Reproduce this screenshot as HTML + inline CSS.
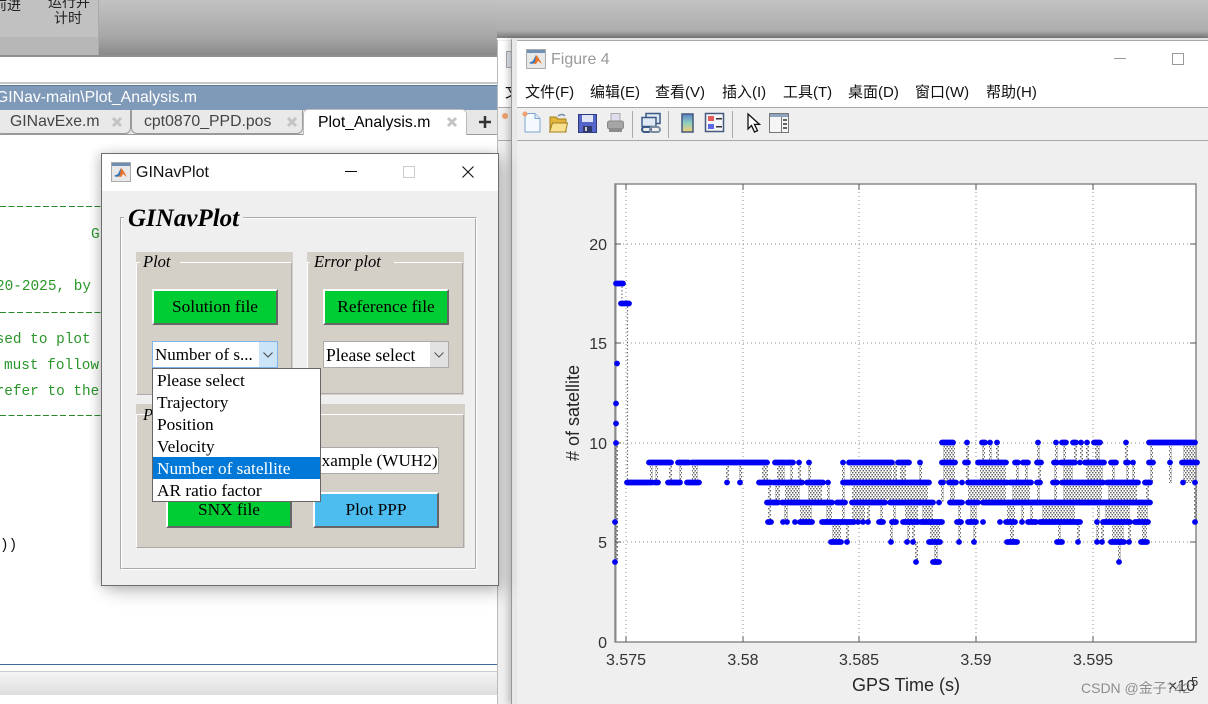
<!DOCTYPE html>
<html><head><meta charset="utf-8"><style>
html,body{margin:0;padding:0;background:#fff}
#p{position:relative;width:1208px;height:704px;overflow:hidden;background:#fff;font-family:"Liberation Sans","Noto Sans CJK SC",sans-serif}
#p div,#p span.a{position:absolute;box-sizing:border-box}
.t{white-space:nowrap;line-height:1}
.m{font-family:"Liberation Mono",monospace;font-size:14.4px;color:#2a962a;white-space:pre;line-height:16px}
.ds{height:1px;left:0;width:101px;background:repeating-linear-gradient(90deg,#2a8a2a 0,#2a8a2a 6px,transparent 6px,transparent 8.6px)}
.s{font-family:"Liberation Serif","Noto Serif CJK SC",serif;color:#000;white-space:nowrap;font-size:17.3px;line-height:20px}
.tab{background:#e9e9e9;border:1px solid #9a9a9a;border-top:0;border-radius:0 0 6px 6px;color:#444;font-size:15.8px;line-height:23px;padding-left:0;white-space:nowrap}
.btn{border:2px solid;border-color:#fff #666 #666 #fff;text-align:center;font-family:"Liberation Serif",serif;font-size:17.3px;color:#000;line-height:32px}
.pan{background:#d4d0c8}
.inner{border:2px solid;border-color:#fff #aaa #aaa #fff;}
.menu{font-size:15px;color:#111;white-space:nowrap;line-height:18px;font-family:"Liberation Sans","Noto Sans CJK SC",sans-serif}
.li{left:1px;width:167px;height:22px;font-family:"Liberation Serif",serif;font-size:17.3px;line-height:22px;padding-left:4px;color:#000;white-space:nowrap}
.tk{font-size:16px;color:#333;line-height:18px;white-space:nowrap}
</style></head><body><div id="p">

<!-- top ribbon -->
<div style="left:0;top:0;width:497px;height:55px;background:linear-gradient(#c2c2c2,#a8a8a8 65%,#8a8a8a)"></div>
<div style="left:497px;top:0;width:711px;height:38px;background:linear-gradient(#c2c2c2,#aeaeae 80%,#7c7c7c)"></div>
<div style="left:0;top:0;width:98px;height:37px;background:#c1c1c1"></div>
<div style="left:0;top:37px;width:98px;height:18px;background:#b7b7b7"></div>
<div style="left:98px;top:0;width:1px;height:55px;background:#aaa"></div>
<div class="t" style="left:-7px;top:-2px;font-size:14px;color:#222">前进</div>
<div class="t" style="left:48px;top:-5px;font-size:14px;color:#222">运行并</div>
<div class="t" style="left:54px;top:11px;font-size:14px;color:#222">计时</div>
<div style="left:0;top:55px;width:497px;height:2px;background:#8f8f8f"></div>

<!-- editor -->
<div style="left:0;top:57px;width:497px;height:26px;background:#fff"></div>
<div style="left:0;top:82px;width:497px;height:2px;background:#c8c8c8"></div>
<div style="left:0;top:85px;width:497px;height:25px;background:#7f9ab8;border-top:1px solid #5c7a9b"></div>
<div class="t" style="left:-4px;top:88px;font-size:15.8px;color:#fff;line-height:20px">GINav-main\Plot_Analysis.m</div>
<div style="left:0;top:110px;width:497px;height:25px;background:#e6e6e6"></div>
<div class="tab" style="left:-4px;top:110px;width:135px;height:24px;padding-left:13px">GINavExe.m</div>
<div class="tab" style="left:131px;top:110px;width:172px;height:24px;padding-left:12px">cpt0870_PPD.pos</div>
<div class="tab" style="left:303px;top:109px;width:164px;height:26px;background:#fff;color:#000;border:1px solid #bbb;border-bottom:0;border-radius:5px 5px 0 0;padding-left:14px;line-height:25px">Plot_Analysis.m</div>
<svg style="position:absolute;left:0;top:110px" width="497" height="25"><path d="M113 8l8 8M121 8l-8 8M288 8l8 8M296 8l-8 8M448 8l8 8M456 8l-8 8" stroke="#c4c4c4" stroke-width="3" fill="none"/><path d="M485 6v12M479 12h12" stroke="#333" stroke-width="2.500"/></svg>
<div style="left:0;top:134px;width:303px;height:1px;background:#9a9a9a"></div>
<div style="left:467px;top:134px;width:30px;height:1px;background:#9a9a9a"></div>

<div class="ds" style="top:206px"></div>
<div class="m" style="left:91px;top:227px">G</div>
<div class="m" style="left:-4px;top:279px">20-2025, by</div>
<div class="ds" style="top:312px"></div>
<div class="m" style="left:-13px;top:332px"> sed to plot</div>
<div class="m" style="left:4px;top:358px">must follow</div>
<div class="m" style="left:-13px;top:384px"> refer to the</div>
<div class="ds" style="top:415px"></div>
<div class="m" style="left:0;top:538px;color:#111">))</div>
<div style="left:0;top:664px;width:497px;height:1px;background:#3f6d9b"></div>
<div style="left:0;top:671px;width:497px;height:1px;background:#ccc"></div>
<div style="left:0;top:672px;width:497px;height:23px;background:linear-gradient(#f5f5f5,#dedede)"></div>

<!-- back window -->
<div style="left:497px;top:40px;width:16px;height:664px;background:#efefef;border-left:1px solid #bbb"></div>
<div style="left:498px;top:41px;width:14px;height:66px;background:#fff"></div>
<div style="left:506px;top:51px;width:6px;height:17px;background:#dfe5ec;border:1px solid #aaa"></div>
<div class="menu" style="left:505px;top:84px">文</div>
<div style="left:498px;top:107px;width:14px;height:1px;background:#aaa"></div>
<div style="left:498px;top:140px;width:14px;height:1px;background:#aaa"></div>
<div style="left:502px;top:113px;width:6px;height:6px;background:#f0a070;border-radius:3px"></div>

<!-- figure window -->
<div style="left:511px;top:38px;width:697px;height:666px;background:#e8e8e8;border-left:1px solid #999;border-top:2px solid #e4e4e4;box-shadow:-3px 0 6px rgba(0,0,0,.2)"></div>
<div style="left:517px;top:41px;width:691px;height:66px;background:#fff"></div>
<div style="left:517px;top:40px;width:691px;height:1px;background:#aaa"></div>
<svg style="position:absolute;left:526px;top:49px" width="20" height="20" viewBox="0 0 20 20"><rect x=".5" y=".5" width="19" height="19" fill="#e8e8e8" stroke="#aaa"/><rect x="1" y="1" width="18" height="3" fill="#6f8fb5"/><path d="M3 14l4-2 3-6 2 2 4 7-4-3-2 3z" fill="#e8742a"/><path d="M3 14l4-2 3-6-1 7-3 2z" fill="#2d78c4"/></svg>
<div class="t" style="left:551px;top:51px;font-size:16px;color:#9a9a9a;line-height:18px">Figure 4</div>
<div style="left:1114px;top:58px;width:12px;height:1px;background:#999"></div>
<div style="left:1172px;top:53px;width:12px;height:12px;border:1px solid #999"></div>
<div class="menu" style="left:525px;top:84px">文件(F)</div>
<div class="menu" style="left:590px;top:84px">编辑(E)</div>
<div class="menu" style="left:655px;top:84px">查看(V)</div>
<div class="menu" style="left:722px;top:84px">插入(I)</div>
<div class="menu" style="left:783px;top:84px">工具(T)</div>
<div class="menu" style="left:848px;top:84px">桌面(D)</div>
<div class="menu" style="left:915px;top:84px">窗口(W)</div>
<div class="menu" style="left:986px;top:84px">帮助(H)</div>
<div style="left:517px;top:107px;width:691px;height:1px;background:#a8a8a8"></div>
<div style="left:517px;top:108px;width:691px;height:596px;background:#efefef"></div>
<div style="left:517px;top:140px;width:691px;height:1px;background:#a8a8a8"></div>

<!-- toolbar icons -->
<svg style="position:absolute;left:515px;top:105px" width="285" height="36" viewBox="0 0 285 36">
<path d="M10 8.500h10l5 5v13.500H10z" fill="#f4f9ff" stroke="#7ea6d0"/><path d="M20 8.500v5h5" fill="#dce9f7" stroke="#7ea6d0"/><circle cx="10" cy="9" r="2.500" fill="#f0a070"/>
<path d="M35 12h6l2 2h8v13H35z" fill="#e3b53f" stroke="#a07f1a"/><path d="M34.500 27l3-9h15l-2 9z" fill="#f9e08f" stroke="#a07f1a"/><path d="M43 11q4-3 7 0" fill="none" stroke="#7b8ea8" stroke-width="1.500"/>
<rect x="63.500" y="9.500" width="18" height="18" fill="#5566c8" stroke="#2d3a80"/><rect x="67" y="10" width="11" height="7" fill="#dfe5f5"/><rect x="68" y="21" width="9" height="6" fill="#30386a"/><rect x="70" y="22" width="2" height="4" fill="#ccc"/>
<rect x="96" y="8.500" width="9" height="8" fill="#dde" stroke="#aaa"/><rect x="92.500" y="16" width="16" height="8" rx="2" fill="#a5a5a5" stroke="#888"/><rect x="94" y="23" width="13" height="4" fill="#8c8c8c"/>
<rect x="117" y="6" width="1" height="27" fill="#aaa"/>
<rect x="131" y="8.500" width="14" height="10" fill="#dfe8f3" stroke="#3a5a85" stroke-width="1.500"/><rect x="127" y="12.500" width="14" height="9" fill="#dfe8f3" stroke="#3a5a85" stroke-width="1.500"/><rect x="127" y="22" width="9" height="5" rx="2.500" fill="none" stroke="#3a5a85" stroke-width="2"/><rect x="135" y="22" width="10" height="5" rx="2.500" fill="none" stroke="#7c8ba0" stroke-width="2"/>
<rect x="153" y="6" width="1" height="27" fill="#aaa"/>
<defs><linearGradient id="cb" x1="0" y1="0" x2="0" y2="1"><stop offset="0" stop-color="#5b7fc8"/><stop offset=".5" stop-color="#8fd0c0"/><stop offset="1" stop-color="#f5cc70"/></linearGradient></defs>
<rect x="167" y="9" width="11" height="18" fill="url(#cb)" stroke="#44597c" stroke-width="1.500"/>
<rect x="190.500" y="8.500" width="18" height="18" fill="#f4f6fa" stroke="#44597c" stroke-width="1.500"/><rect x="193" y="11" width="6" height="5" fill="#e25a5a"/><rect x="193" y="19" width="6" height="5" fill="#5a6ae2"/><rect x="201" y="13" width="6" height="1.500" fill="#333"/><rect x="201" y="21" width="6" height="1.500" fill="#333"/>
<rect x="217" y="6" width="1" height="27" fill="#aaa"/>
<path d="M233 9v15l3.500-3.500 3 6.500 3-1.300-3-6.300h5z" fill="#fff" stroke="#111" stroke-width="1.300"/>
<rect x="254.500" y="8.500" width="19" height="19" fill="#f5f5f5" stroke="#777"/><rect x="255" y="9" width="18" height="3" fill="#8da3c0"/><rect x="266" y="12" width="1" height="15" fill="#777"/><path d="M268 15h4M268 19h4M268 23h4" stroke="#333" stroke-width="1.500"/>
</svg>

<!-- plot -->
<svg style="position:absolute;left:0;top:0" width="1208" height="704" viewBox="0 0 1208 704">
<defs><pattern id="d" width="3" height="4" patternUnits="userSpaceOnUse"><rect width="1.500" height="1.500" fill="#666"/><rect x="1.500" y="2" width="1.500" height="1.500" fill="#666"/></pattern></defs>
<rect x="615" y="184" width="581" height="458" fill="#fff"/>
<path d="M626 184V642M743 184V642M859 184V642M976 184V642M1093 184V642M615 244H1196M615 343H1196M615 443H1196M615 542H1196" fill="none" stroke="#8c8c8c" stroke-width="1" stroke-dasharray="1 3"/>
<path d="M615 184H1196V642H615Z" fill="none" stroke="#8a8a8a" stroke-width="1.500"/>
<path d="M615.500 184V642" stroke="#8a8a8a" stroke-width="2"/>
<path d="M626 642v-6M743 642v-6M859 642v-6M976 642v-6M1093 642v-6M626 184v6M743 184v6M859 184v6M976 184v6M1093 184v6M615 542h6M615 443h6M615 343h6M615 244h6M1196 542h-6M1196 443h-6M1196 343h-6M1196 244h-6" stroke="#555" stroke-width="1"/>
<path d="M622 283V303M627.500 303V483" fill="none" stroke="#777" stroke-width="1.200" stroke-dasharray="1.500 2"/>
<path fill="url(#d)" d="M615 443h3v119h-3z
M650 463h3v20h-3zM655 463h3v20h-3zM669 463h3v20h-3zM679 463h3v20h-3zM692 463h6v20h-6zM726 463h3v20h-3zM739 463h3v20h-3zM762 463h6v20h-6zM777 463h8v20h-8zM790 463h3v20h-3zM798 463h3v20h-3zM808 463h3v20h-3zM842 463h3v20h-3zM850 463h42v20h-42zM893 463h4v20h-4zM900 463h6v20h-6zM919 463h3v20h-3zM943 463h12v20h-12zM966 463h3v20h-3zM980 463h26v20h-26zM1016 463h3v20h-3zM1025 463h3v20h-3zM1038 463h3v20h-3zM1054 463h3v20h-3zM1063 463h10v20h-10zM1086 463h17v20h-17zM1112 463h3v20h-3zM1126 463h3v20h-3zM1132 463h3v20h-3zM1150 463h3v20h-3zM1169 463h3v20h-3zM1183 463h13v20h-13z
M768 483h3v19h-3zM775 483h5v19h-5zM785 483h15v19h-15zM808 483h14v19h-14zM827 483h3v19h-3zM842 483h3v19h-3zM852 483h76v19h-76zM941 483h3v19h-3zM950 483h5v19h-5zM968 483h38v19h-38zM1012 483h18v19h-18zM1037 483h3v19h-3zM1054 483h3v19h-3zM1063 483h39v19h-39zM1108 483h29v19h-29zM1146 483h3v19h-3zM1194 483h3v39h-3z
M768 502h3v20h-3zM784 502h4v20h-4zM800 502h12v20h-12zM826 502h6v20h-6zM842 502h3v20h-3zM852 502h13v20h-13zM867 502h3v20h-3zM880 502h3v20h-3zM893 502h3v20h-3zM905 502h13v20h-13zM922 502h11v20h-11zM958 502h3v20h-3zM970 502h7v20h-7zM1007 502h8v20h-8zM1021 502h3v20h-3zM1030 502h3v20h-3zM1042 502h33v20h-33zM1097 502h3v20h-3zM1105 502h25v20h-25zM1137 502h11v20h-11z
M832 522h9v20h-9zM846 522h3v20h-3zM890 522h3v20h-3zM907 522h3v20h-3zM912 522h3v20h-3zM930 522h10v20h-10zM958 522h3v20h-3zM973 522h3v20h-3zM1010 522h4v20h-4zM1058 522h3v20h-3zM1077 522h3v20h-3zM1096 522h3v20h-3zM1101 522h3v20h-3zM1112 522h12v20h-12zM1128 522h3v20h-3zM1142 522h5v20h-5z
M915 542h3v20h-3zM934 542h4v20h-4zM1118 542h3v20h-3z
M943 443h12v20h-12zM966 443h3v20h-3zM982 443h3v20h-3zM989 443h3v20h-3zM996 443h3v20h-3zM1037 443h3v20h-3zM1055 443h3v20h-3zM1063 443h3v20h-3zM1074 443h3v20h-3zM1080 443h3v20h-3zM1086 443h3v20h-3zM1095 443h5v20h-5zM1125 443h3v20h-3zM1150 443h3v20h-3zM1169 443h3v20h-3zM1183 443h12v20h-12z"/>
<g fill="none" stroke="#0000f5" stroke-width="5.800" stroke-linecap="round">
<path d="M616 283.500H623M621 303.500H629M617 363.500h.01M616 403.500h.01M616 423.500h.01M616 443h.01M615 522h.01M615 562h.01"/>
<path d="M942 442.500H953M967 442.500h.01M982 442.500H985M990 442.500h.01M997 442.500h.01M1038 442.500h.01M1056 442.500h.01M1062 442.500H1066M1073 442.500H1076M1081 442.500h.01M1087 442.500h.01M1094 442.500H1100M1126 442.500h.01M1149 442.500H1195"/>
<path d="M649 462.500H671M678 462.500H689M692 462.500H767M775 462.500H785M787 462.500H793M799 462.500h.01M809 462.500h.01M843 462.500h.01M849 462.500H892M898 462.500H909M920 462.500h.01M942 462.500H955M965 462.500H968M978 462.500H1006M1015 462.500H1018M1023 462.500H1028M1037 462.500H1041M1054 462.500H1057M1061 462.500H1075M1080 462.500h.01M1085 462.500H1104M1111 462.500H1116M1126 462.500H1128M1133 462.500h.01M1149 462.500H1153M1170 462.500h.01M1182 462.500H1197"/>
<path d="M627 482.500H652M655 482.500H658M668 482.500H680M687 482.500H699M727 482.500h.01M740 482.500h.01M759 482.500H771M774 482.500H802M807 482.500H823M828 482.500h.01M843 482.500H929M941 482.500H943M949 482.500H956M962 482.500h.01M968 482.500H1007M1010 482.500H1031M1037 482.500H1040M1053 482.500H1057M1062 482.500H1103M1107 482.500H1138M1145 482.500H1150M1183 482.500h.01M1195 482.500h.01"/>
<path d="M767 502.500H778M782 502.500H832M837 502.500H845M852 502.500H885M890 502.500H933M939 502.500h.01M950 502.500H962M968 502.500H978M983 502.500H1150"/>
<path d="M768 522H771M783 522h.01M787 522h.01M795 522h.01M800 522H812M822 522H854M858 522h.01M863 522h.01M868 522h.01M879 522H883M892 522H896M903 522H918M921 522H942M957 522H961M968 522H976M983 522h.01M1000 522h.01M1006 522H1015M1022 522h.01M1028 522H1036M1040 522H1080M1097 522h.01M1103 522H1130M1135 522H1148M1195 522h.01"/>
<path d="M831 542H841M847 542h.01M891 542h.01M907 542h.01M913 542h.01M929 542H940M959 542h.01M974 542h.01M1007 542H1017M1057 542H1062M1078 542h.01M1097 542h.01M1102 542h.01M1111 542H1124M1129 542h.01M1141 542H1147"/>
<path d="M916 562h.01M933 562H939M1119 562h.01"/>
</g>
</svg>
<div class="tk" style="left:587px;top:237px;width:20px;text-align:right">20</div>
<div class="tk" style="left:587px;top:336px;width:20px;text-align:right">15</div>
<div class="tk" style="left:587px;top:436px;width:20px;text-align:right">10</div>
<div class="tk" style="left:587px;top:535px;width:20px;text-align:right">5</div>
<div class="tk" style="left:587px;top:635px;width:20px;text-align:right">0</div>
<div class="tk" style="left:596px;top:652px;width:60px;text-align:center">3.575</div>
<div class="tk" style="left:713px;top:652px;width:60px;text-align:center">3.58</div>
<div class="tk" style="left:829px;top:652px;width:60px;text-align:center">3.585</div>
<div class="tk" style="left:946px;top:652px;width:60px;text-align:center">3.59</div>
<div class="tk" style="left:1063px;top:652px;width:60px;text-align:center">3.595</div>
<div class="tk" style="left:826px;top:675px;width:160px;text-align:center;font-size:18px;color:#262626;line-height:20px">GPS Time (s)</div>
<div class="tk" style="left:513px;top:403px;width:120px;text-align:center;font-size:18px;color:#262626;line-height:20px;transform:rotate(-90deg)"># of satellite</div>
<div class="tk" style="left:1168px;top:678px;color:#333">×10</div>
<div class="tk" style="left:1191px;top:673px;font-size:13px;color:#333">5</div>
<div class="t" style="left:1081px;top:680px;font-size:14px;color:rgba(110,110,110,.75);line-height:16px">CSDN @金子742</div>

<!-- GINavPlot window -->
<div style="left:101px;top:153px;width:398px;height:433px;background:#efefef;border:1px solid #6e6e6e;box-shadow:6px 6px 16px rgba(0,0,0,.22),-4px 0 10px rgba(0,0,0,.15)"></div>
<div style="left:102px;top:154px;width:396px;height:37px;background:#fff"></div>
<svg style="position:absolute;left:111px;top:162px" width="20" height="20" viewBox="0 0 20 20"><rect x=".5" y=".5" width="19" height="19" fill="#e8e8e8" stroke="#aaa"/><rect x="1" y="1" width="18" height="3" fill="#6f8fb5"/><path d="M3 14l4-2 3-6 2 2 4 7-4-3-2 3z" fill="#e8742a"/><path d="M3 14l4-2 3-6-1 7-3 2z" fill="#2d78c4"/></svg>
<div class="t" style="left:136px;top:164px;font-size:16px;color:#111;line-height:18px">GINavPlot</div>
<div style="left:345px;top:171px;width:12px;height:1px;background:#000"></div>
<div style="left:403px;top:166px;width:12px;height:12px;border:1px solid #ccc"></div>
<svg style="position:absolute;left:461px;top:165px" width="14" height="14"><path d="M1.500 1.500l11 11M12.500 1.500l-11 11" stroke="#111" stroke-width="1.100"/></svg>

<div style="left:120px;top:217px;width:357px;height:353px;border:1px solid;border-color:#aaa #fff #fff #aaa"></div>
<div style="left:121px;top:218px;width:355px;height:351px;border:1px solid;border-color:#fff #aaa #aaa #fff"></div>
<div style="left:124px;top:208px;width:121px;height:24px;background:#efefef;width:119px"></div>
<div class="s" style="left:128px;top:205px;font-size:25px;font-weight:bold;font-style:italic;line-height:28px">GINavPlot</div>

<div class="pan" style="left:136px;top:252px;width:157px;height:143px"></div>
<div class="inner" style="left:136px;top:262px;width:156px;height:133px;border-width:1px"></div>
<div class="pan" style="left:140px;top:254px;width:40px;height:18px"></div>
<div class="s" style="left:143px;top:252px;font-style:italic;font-size:16.500px">Plot</div>
<div class="pan" style="left:307px;top:252px;width:157px;height:143px"></div>
<div class="inner" style="left:307px;top:262px;width:156px;height:132px;border-width:1px"></div>
<div class="pan" style="left:310px;top:254px;width:84px;height:18px"></div>
<div class="s" style="left:314px;top:252px;font-style:italic;font-size:16.500px">Error plot</div>
<div class="pan" style="left:136px;top:404px;width:329px;height:144px"></div>
<div class="inner" style="left:136px;top:414px;width:328px;height:134px;border-width:1px"></div>
<div class="s" style="left:143px;top:405px;font-style:italic;font-size:16.500px">P</div>

<div class="btn" style="left:152px;top:289px;width:126px;height:36px;background:#00cc33">Solution file</div>
<div class="btn" style="left:323px;top:289px;width:126px;height:36px;background:#00cc33">Reference file</div>
<div style="left:152px;top:341px;width:126px;height:27px;background:#fff;border:1px solid #7eb4ea"></div>
<div style="left:259px;top:342px;width:18px;height:25px;background:#cce4f7"></div>
<div class="s" style="left:155px;top:345px;font-size:17px">Number of s...</div>
<svg style="position:absolute;left:262px;top:350px" width="12" height="10"><path d="M1.500 2.500l4.500 4.500 4.500-4.500" fill="none" stroke="#444"/></svg>
<div style="left:323px;top:341px;width:126px;height:27px;background:#fff;border:1px solid #aaa"></div>
<div style="left:430px;top:342px;width:18px;height:25px;background:#e1e1e1"></div>
<div class="s" style="left:326px;top:345px;font-size:17.6px">Please select</div>
<svg style="position:absolute;left:433px;top:350px" width="12" height="10"><path d="M1.500 2.500l4.500 4.500 4.500-4.500" fill="none" stroke="#555"/></svg>

<div style="left:300px;top:447px;width:139px;height:27px;background:#fff;border:1px solid #aaa"></div>
<div class="s" style="left:314px;top:451px;font-size:17.2px">example (WUH2)</div>
<div class="btn" style="left:166px;top:492px;width:126px;height:36px;background:#00cc33;line-height:32px">SNX file</div>
<div class="btn" style="left:313px;top:492px;width:126px;height:36px;background:#4dbdf0;line-height:32px">Plot PPP</div>

<div style="left:152px;top:368px;width:169px;height:134px;background:#fff;border:1px solid #666">
<div class="li" style="top:1px;left:0">Please select</div>
<div class="li" style="top:23px;left:0">Trajectory</div>
<div class="li" style="top:45px;left:0">Position</div>
<div class="li" style="top:67px;left:0">Velocity</div>
<div class="li" style="top:88px;left:0;background:#0078d7;color:#fff;line-height:24px">Number of satellite</div>
<div class="li" style="top:111px;left:0">AR ratio factor</div>
</div>

</div></body></html>
